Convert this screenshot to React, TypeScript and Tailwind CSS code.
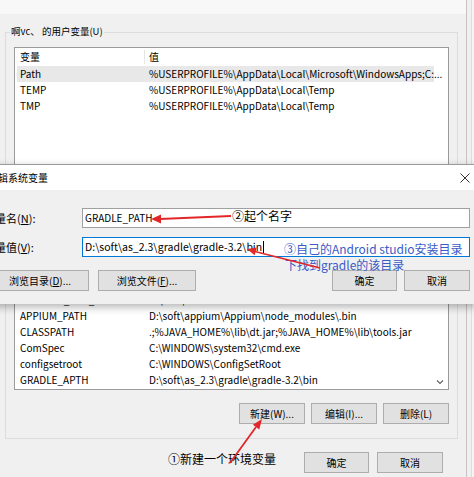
import React from "react";

const userVars: [string, string][] = [
  ["Path", "%USERPROFILE%\\AppData\\Local\\Microsoft\\WindowsApps;C:..."],
  ["TEMP", "%USERPROFILE%\\AppData\\Local\\Temp"],
  ["TMP", "%USERPROFILE%\\AppData\\Local\\Temp"],
];

const sysVars: [string, string][] = [
  ["ANDROID_SDK_HOME", "D:\\soft\\android-sdk"],
  ["APPIUM_PATH", "D:\\soft\\appium\\Appium\\node_modules\\.bin"],
  ["CLASSPATH", ".;%JAVA_HOME%\\lib\\dt.jar;%JAVA_HOME%\\lib\\tools.jar"],
  ["ComSpec", "C:\\WINDOWS\\system32\\cmd.exe"],
  ["configsetroot", "C:\\WINDOWS\\ConfigSetRoot"],
  ["GRADLE_APTH", "D:\\soft\\as_2.3\\gradle\\gradle-3.2\\bin"],
];

function Btn({ children, className = "" }: { children: React.ReactNode; className?: string }) {
  return (
    <div
      className={`flex flex-none items-center justify-center h-[21px] bg-[#e1e1e1] border border-[#adadad] whitespace-nowrap ${className}`}
    >
      {children}
    </div>
  );
}

function Row({ k, v, selected = false }: { k: string; v: string; selected?: boolean }) {
  return (
    <div
      className={`flex flex-none items-center h-[16px] ml-[2px] mr-[14px] whitespace-nowrap ${
        selected ? "bg-[#e8e8e8]" : ""
      }`}
    >
      <span className="w-[132px] flex-none pl-[3px]">{k}</span>
      <span>{v}</span>
    </div>
  );
}

export default function App() {
  return (
    <div className="relative w-[474px] h-[477px] overflow-hidden bg-[#f0f0f0] font-['Noto_Sans_CJK_SC',sans-serif] text-[10px] leading-none text-black">
      {/* main window */}
      <div className="flex h-[477px]">
        <div className="w-[467px] flex-none flex flex-col border-r border-[#c4c4c4]">
          <div className="h-[14px] flex-none bg-[#f8f8f8]" />
          <div className="pt-[18px] pl-[5px]">
            <div className="relative w-[453px] h-[407px] border border-[#dcdcdc] flex flex-col">
              <span className="absolute top-[-6px] left-[4px] bg-[#f0f0f0] px-[1px] text-[9.5px]">
                啊vc、 的用户变量(U)
              </span>
              {/* user list */}
              <div className="ml-[8px] mt-[14px] w-[435px] h-[133px] flex-none border border-[#9a9a9a] bg-white flex flex-col">
                <div className="flex flex-none items-center h-[18px] ml-[2px] mr-[14px]">
                  <span className="w-[127px] flex-none pl-[3px]">变量</span>
                  <span className="w-px h-[14px] bg-[#e5e5e5] mr-[4px]" />
                  <span>值</span>
                </div>
                {userVars.map(([k, v], i) => (
                  <Row key={k} k={k} v={v} selected={i === 0} />
                ))}
              </div>
              {/* system list */}
              <div className="relative ml-[8px] mt-[109px] w-[435px] h-[101px] flex-none border border-[#9a9a9a] bg-white flex flex-col justify-end pb-[1px] overflow-hidden">
                {sysVars.map(([k, v]) => (
                  <Row key={k} k={k} v={v} />
                ))}
                <svg
                  className="absolute right-[4px] bottom-[4px]"
                  width="8"
                  height="6"
                  viewBox="0 0 8 6"
                >
                  <path d="M1 1.5 L4 4.5 L7 1.5" fill="none" stroke="#606060" strokeWidth="1.1" />
                </svg>
              </div>
              <div className="flex justify-end gap-[6px] pr-[8px] mt-[13px]">
                <Btn className="w-[66px]">新建(W)...</Btn>
                <Btn className="w-[66px]">编辑(I)...</Btn>
                <Btn className="w-[66px]">删除(L)</Btn>
              </div>
            </div>
          </div>
          <div className="flex justify-end gap-[8px] pr-[23px] mt-[13px]">
            <Btn className="w-[65px]">确定</Btn>
            <Btn className="w-[66px]">取消</Btn>
          </div>
        </div>
        <div className="flex-1 bg-[#f4f4f4] border-l border-[#dedede] ml-[4px]" />
      </div>

      {/* edit system variable dialog */}
      <div className="absolute top-[164px] left-[-24px] w-[500px] h-[140px] border-t border-[#9a9a9a] bg-[#f0f0f0] flex flex-col shadow-[0_3px_8px_rgba(0,0,0,0.3)]">
        <div className="h-[25px] flex-none bg-white flex items-center justify-between pl-[12px] pr-[6px] text-[10px]">
          <span>编辑系统变量</span>
          <svg width="10" height="10" viewBox="0 0 10 10">
            <path d="M0.5 0.5 L9.5 9.5 M9.5 0.5 L0.5 9.5" stroke="#333" strokeWidth="1" />
          </svg>
        </div>
        <div className="flex flex-col pl-[8px] pr-[6px] pt-[18px] text-[11px]">
          <div className="flex items-center h-[20px]">
            <span className="w-[98px] flex-none">
              变量名(<span className="underline">N</span>):
            </span>
            <div className="flex-1 h-[20px] bg-white border border-[#a0a0a0] flex items-center pl-[2px] text-[10px]">
              GRADLE_PATH
            </div>
          </div>
          <div className="flex items-center h-[20px] mt-[9px]">
            <span className="w-[98px] flex-none">
              变量值(<span className="underline">V</span>):
            </span>
            <div className="flex-1 h-[20px] bg-white border border-[#0078d7] flex items-center pl-[2px] text-[10.5px]">
              <span>D:\soft\as_2.3\gradle\gradle-3.2\bin</span>
              <span className="w-px h-[12px] bg-black ml-[1px]" />
            </div>
          </div>
          <div className="flex items-center mt-[13px] pl-[7px] text-[10px]">
            <Btn className="w-[98px]">
              浏览目录(<span className="underline">D</span>)...
            </Btn>
            <Btn className="w-[98px] ml-[9px]">
              浏览文件(<span className="underline">F</span>)...
            </Btn>
            <Btn className="w-[65px] ml-auto">确定</Btn>
            <Btn className="w-[66px] ml-[7px]">取消</Btn>
          </div>
        </div>
      </div>

      {/* annotations */}
      <span className="absolute left-[232px] top-[208px] text-[12px] leading-[16px] text-black whitespace-nowrap">
        ②起个名字
      </span>
      <div className="absolute left-[284px] top-[241px] text-[12px] leading-[16px] text-[#3a5bc7] whitespace-nowrap flex flex-col">
        <span>③自己的Android studio安装目录</span>
        <span className="pl-[1px]">下找到gradle的该目录</span>
      </div>
      <span className="absolute left-[168px] top-[451px] text-[12px] leading-[16px] text-black whitespace-nowrap">
        ①新建一个环境变量
      </span>

      <svg className="absolute left-0 top-0 pointer-events-none" width="474" height="477">
        <g stroke="#e3262a" strokeWidth="1.8" fill="#e3262a">
          <line x1="231" y1="216" x2="160" y2="219" />
          <polygon points="151,219 161,214.5 161,223.5" stroke="none" />
          <line x1="320" y1="268" x2="255" y2="251.5" />
          <polygon points="247,249 256.7,247.4 254.7,255.2" stroke="none" />
          <line x1="230" y1="463" x2="256" y2="427" />
          <polygon points="262,419 259.3,429.5 252.9,424.7" stroke="none" />
        </g>
      </svg>
    </div>
  );
}
